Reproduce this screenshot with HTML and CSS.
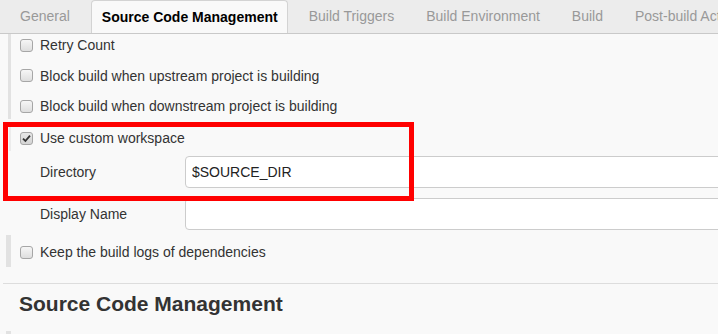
FILE: index.html
```html
<!DOCTYPE html>
<html lang="en">
<head>
    <meta charset="UTF-8">
    <title>Job Configuration</title>
    <link rel="stylesheet" href="styles.css">
</head>
<body>

<div class="tabs">
    <span class="tab">General</span>
    <span class="tab active">Source Code Management</span>
    <span class="tab">Build Triggers</span>
    <span class="tab">Build Environment</span>
    <span class="tab">Build</span>
    <span class="tab">Post-build Actions</span>
</div>

<div class="config">
    <div class="group">
        <div class="check-row"><span class="cb"></span>Retry Count</div>
        <div class="check-row"><span class="cb"></span>Block build when upstream project is building</div>
        <div class="check-row"><span class="cb"></span>Block build when downstream project is building</div>
    </div>

    <div class="group workspace">
        <div class="check-row"><span class="cb checked"><svg width="9" height="9" viewBox="0 0 9 9"><path d="M1 4.6 L3.4 7 L8 1.6" fill="none" stroke="#333" stroke-width="1.8"/></svg></span>Use custom workspace</div>
    </div>

    <div class="field dir">
        <label>Directory</label>
        <input type="text" value="$SOURCE_DIR">
    </div>

    <div class="field display">
        <label>Display Name</label>
        <input type="text" value="">
    </div>

    <div class="group keep">
        <div class="check-row"><span class="cb"></span>Keep the build logs of dependencies</div>
    </div>

    <div class="section-head">
        <h2>Source Code Management</h2>
    </div>
    <div class="group next"></div>
</div>

<!-- annotation -->
<div class="highlight"></div>

</body>
</html>
```

FILE: styles.css
```css
body {
    font-family: "Liberation Sans", Arial, sans-serif;
    font-size: 14px;
    color: #333;
    margin: 0;
    padding: 0;
    background-color: #f9f9f9;
    overflow: hidden;
    position: relative;
    height: 334px;
}
.tabs {
    display: flex;
    height: 33px;
    padding-left: 9px;
    background: #ececec;
    border-bottom: 1px solid #c9c9c9;
    white-space: nowrap;
    overflow: hidden;
}
.tab {
    line-height: 33px;
    padding: 0 11px;
    margin-right: 10px;
    color: #999;
}
.tab.active {
    line-height: 33px;
    padding: 0 9px 0 10px;
    background: #f9f9f9;
    color: #000;
    font-weight: bold;
    border: 1px solid #d3d3d3;
    border-bottom: none;
    border-radius: 4px 4px 0 0;
    box-sizing: border-box;
    margin-bottom: -1px;
    height: 34px;
}
.group {
    margin-left: 8px;
    border-left: 3px solid #e2e2e2;
    padding-left: 9px;
}
.check-row {
    display: flex;
    align-items: center;
    height: 22px;
    padding-bottom: 8.5px;
}
.group .check-row:last-child {
    padding-bottom: 2px;
}
.cb {
    width: 11px;
    height: 11px;
    border: 1px solid #a6a6a6;
    border-radius: 3px;
    background: linear-gradient(#f6f6f6, #dedede);
    margin-right: 7px;
    display: flex;
    align-items: center;
    justify-content: center;
}
.cb.checked {
    background: linear-gradient(#e6e6e6, #d4d4d4);
}
.workspace {
    margin-top: 8px;
    margin-left: 9px;
    border-left-width: 2px;
    border-left-color: #ececec;
    padding-left: 9px;
}
.workspace .check-row {
    padding-bottom: 4px;
}
.field {
    display: flex;
    align-items: center;
    padding-left: 40px;
    height: 32px;
}
.field label {
    width: 145px;
    flex: none;
}
.field input {
    flex: 1;
    height: 32px;
    box-sizing: border-box;
    margin-right: -10px;
    border: 1px solid #ccc;
    border-radius: 4px;
    background: white;
    font-family: inherit;
    font-size: 14px;
    color: #222;
    padding: 0 6px;
}
.field.dir {
    margin-top: 5px;
}
.field.display {
    margin-top: 10px;
}
.keep {
    margin-top: 5px;
    margin-left: 6px;
    border-left-width: 5px;
    padding-left: 9px;
    padding-top: 6px;
    padding-bottom: 2px;
}
.keep .check-row {
    padding-bottom: 0;
}
.section-head {
    margin-top: 16px;
    margin-left: 3px;
    border-top: 1px solid #ddd;
}
.section-head h2 {
    margin: 0;
    padding: 5px 0 0 16px;
    font-size: 21px;
    line-height: 30px;
    color: #333;
}
.next {
    margin-top: 12px;
    margin-left: 6px;
    border-left-width: 5px;
    height: 20px;
}
.highlight {
    position: absolute;
    left: 3px;
    top: 122px;
    width: 411px;
    height: 79px;
    box-sizing: border-box;
    border: 5px solid #ff0000;
}
```
